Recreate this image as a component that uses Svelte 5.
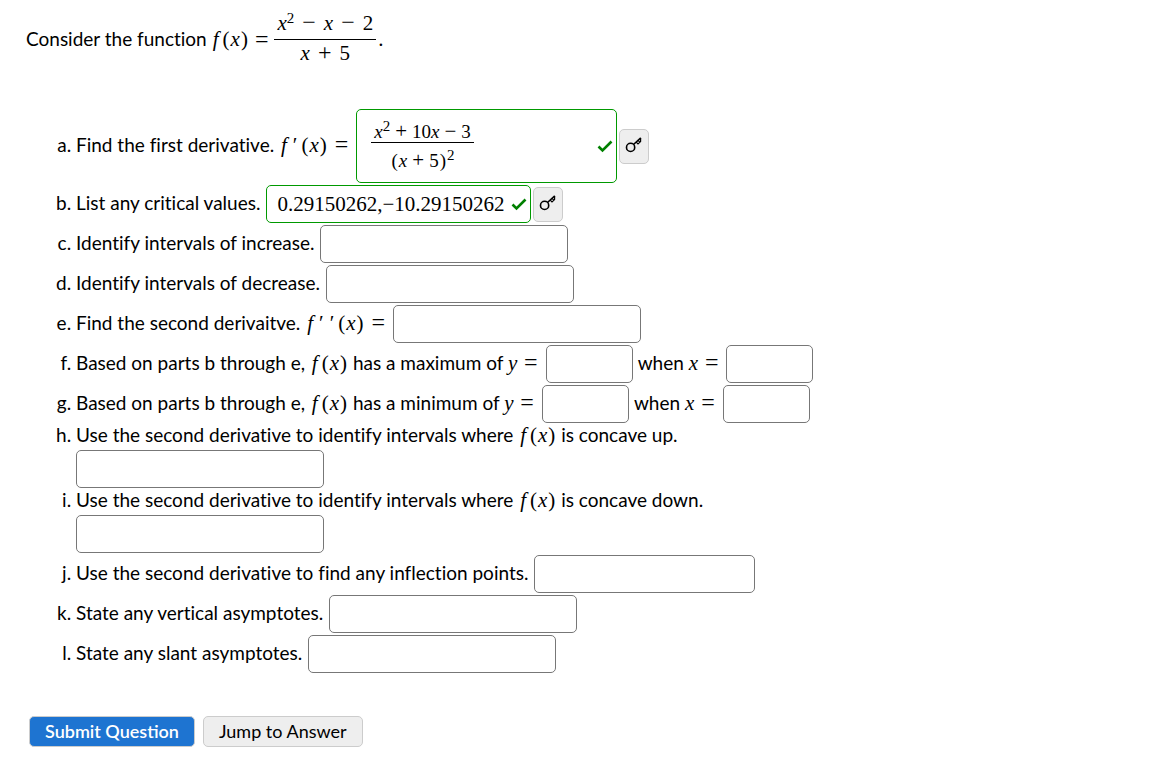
<script lang="ts">
	let criticalValues = $state('0.29150262,−10.29150262');
	let answers = $state<Record<string, string>>({});

	const extremes = [
		{ id: 'f', kind: 'maximum' },
		{ id: 'g', kind: 'minimum' },
	];

	const concavity = [
		{ id: 'h', direction: 'up' },
		{ id: 'i', direction: 'down' },
	];

	const asymptotes = [
		{ id: 'k', kind: 'vertical' },
		{ id: 'l', kind: 'slant' },
	];

	function handleSubmit(e: SubmitEvent) {
		e.preventDefault();
	}
</script>

{#snippet fx(primes = '')}
	<span class="math"><i class="fn">f</i>{#each primes as p}<span class="prime">{p}</span>{/each}<span class="paren">(</span><i>x</i><span class="paren">)</span></span>
{/snippet}

{#snippet check()}
	<svg class="check" width="16" height="14" viewBox="0 0 16 14" fill="none" stroke="#008000" stroke-width="2.6" aria-label="Correct" role="img">
		<path d="M1.5 7.5L5.5 11.5L14.5 2.5" />
	</svg>
{/snippet}

{#snippet keyButton()}
	<button type="button" class="key" title="View Key" aria-label="View Key">
		<svg width="18" height="18" viewBox="0 0 18 18" fill="none" stroke="#000" stroke-width="1.6">
			<circle cx="5.6" cy="11.4" r="4.1" />
			<path d="M8.5 8.5L15.8 1.8" />
			<path d="M15.6 2V5.6L13 8L11.2 6.2M13 4.4L15 6.2" stroke-width="1.2" />
		</svg>
	</button>
{/snippet}

<form class="question" onsubmit={handleSubmit}>
	<div class="intro">
		<span class="lead">Consider the function</span>
		{@render fx()}
		<span class="math eq">=</span>
		<span class="math frac">
			<span class="num"><i>x</i><sup>2</sup><span class="op">−</span><i>x</i><span class="op">−</span>2</span>
			<span class="den"><i>x</i><span class="op">+</span>5</span>
		</span><span class="math stop">.</span>
	</div>

	<ol type="a">
		<li>
			<div class="row">
				<span id="label-a" class="prompt">Find the first derivative. {@render fx('′')} <span class="math eq">=</span></span>
				<div class="mathbox" role="textbox" tabindex="0" aria-labelledby="label-a">
					<span class="math frac small">
						<span class="num"><i>x</i><sup>2</sup><span class="op">+</span>10<i>x</i><span class="op">−</span>3</span>
						<span class="den"><span class="paren">(</span><i>x</i><span class="op">+</span>5<span class="paren">)</span><sup>2</sup></span>
					</span>
					{@render check()}
				</div>
				{@render keyButton()}
			</div>
		</li>
		<li>
			<div class="row">
				<label class="prompt" for="ans-b">List any critical values.</label>
				<div class="checked">
					<input id="ans-b" class="math" type="text" bind:value={criticalValues} />
					{@render check()}
				</div>
				{@render keyButton()}
			</div>
		</li>
		<li>
			<div class="row">
				<label class="prompt" for="ans-c">Identify intervals of increase.</label>
				<input id="ans-c" class="answer" type="text" bind:value={answers.c} />
			</div>
		</li>
		<li>
			<div class="row">
				<label class="prompt" for="ans-d">Identify intervals of decrease.</label>
				<input id="ans-d" class="answer" type="text" bind:value={answers.d} />
			</div>
		</li>
		<li>
			<div class="row">
				<label class="prompt" for="ans-e">Find the second derivaitve. {@render fx('′′')} <span class="math eq">=</span></label>
				<input id="ans-e" class="answer" type="text" bind:value={answers.e} />
			</div>
		</li>
		{#each extremes as { id, kind }}
			<li>
				<div class="row">
					<label class="prompt" for="ans-{id}-y">Based on parts b through e, {@render fx()} has a {kind} of <span class="math"><i>y</i></span> <span class="math eq">=</span></label>
					<input id="ans-{id}-y" class="answer short" type="text" bind:value={answers[id + 'y']} />
					<label class="prompt when" for="ans-{id}-x">when <span class="math"><i>x</i></span> <span class="math eq">=</span></label>
					<input id="ans-{id}-x" class="answer short" type="text" bind:value={answers[id + 'x']} />
				</div>
			</li>
		{/each}
		{#each concavity as { id, direction }}
			<li>
				<label class="line" for="ans-{id}">Use the second derivative to identify intervals where {@render fx()} is concave {direction}.</label>
				<div class="row">
					<input id="ans-{id}" class="answer" type="text" bind:value={answers[id]} />
				</div>
			</li>
		{/each}
		<li>
			<div class="row">
				<label class="prompt" for="ans-j">Use the second derivative to find any inflection points.</label>
				<input id="ans-j" class="answer medium" type="text" bind:value={answers.j} />
			</div>
		</li>
		{#each asymptotes as { id, kind }}
			<li>
				<div class="row">
					<label class="prompt" for="ans-{id}">State any {kind} asymptotes.</label>
					<input id="ans-{id}" class="answer" type="text" bind:value={answers[id]} />
				</div>
			</li>
		{/each}
	</ol>

	<div class="actions">
		<button type="submit" class="btn primary">Submit Question</button>
		<button type="button" class="btn">Jump to Answer</button>
	</div>
</form>

<style>
	:global(body) {
		margin: 0;
		background: #fff;
	}

	.question {
		padding: 10px 26px;
		font-family: 'Trebuchet MS', Lato, sans-serif;
		font-size: 19px;
		font-variant-ligatures: none;
		line-height: 21px;
		color: #000;
	}

	.intro {
		display: flex;
		align-items: center;
		gap: 4px;
		height: 58px;
	}

	.lead {
		padding-bottom: 2px;
	}

	.math {
		font-family: 'Liberation Serif', serif;
		font-size: 21px;
		line-height: 21px;
		white-space: nowrap;
	}

	.fn {
		margin: 0 3px 0 2px;
	}

	.prime {
		margin: 0 3px;
	}

	.paren {
		margin: 0 1px;
	}

	.eq {
		margin: 0 2px;
	}

	.eq,
	.op {
		font-size: 24px;
	}

	.op {
		margin: 0 8px;
		line-height: 0;
	}

	sup {
		font-size: 15px;
		line-height: 0;
		vertical-align: 7px;
	}

	.frac {
		display: inline-flex;
		flex-direction: column;
		text-align: center;
	}

	.num {
		padding: 0 3px 5px;
		border-bottom: 1px solid #000;
	}

	.den {
		padding: 3px 3px 2px;
	}

	.stop {
		margin-left: -2px;
	}

	.small {
		font-size: 19px;
		line-height: 20px;
	}

	.small .num {
		padding-bottom: 0;
	}

	.small .den {
		padding: 8px 3px 0;
	}

	.small .op {
		margin: 0 5px;
		font-size: 21px;
	}

	ol {
		margin: 40px 0 0;
		padding: 0 0 0 50px;
	}

	.row {
		display: flex;
		align-items: center;
		min-height: 40px;
		gap: 2px;
	}

	.prompt {
		padding: 0 4px 3px 0;
		white-space: nowrap;
	}

	.when {
		padding-left: 3px;
	}

	.line {
		display: block;
		padding-bottom: 3px;
	}

	input {
		box-sizing: border-box;
		margin: 0;
		color: #000;
	}

	.answer {
		width: 248px;
		height: 38px;
		padding: 4px 8px;
		border: 1px solid #777;
		border-radius: 5px;
		background: #fff;
		font-size: 19px;
	}

	.medium {
		width: 221px;
	}

	.short {
		width: 87px;
	}

	.mathbox,
	.checked {
		box-sizing: border-box;
		display: flex;
		align-items: center;
		justify-content: space-between;
		border: 1px solid #090;
		border-radius: 5px;
	}

	.mathbox {
		width: 261px;
		height: 74px;
		margin: 1px 0;
		padding: 0 3px 0 14px;
	}

	.checked {
		width: 265px;
		height: 38px;
		padding: 0 3px 0 10px;
	}

	.checked input {
		flex: 1;
		min-width: 0;
		padding: 0;
		border: none;
		outline: none;
		background: transparent;
	}

	.check {
		flex: none;
	}

	.key {
		display: flex;
		justify-content: center;
		box-sizing: border-box;
		width: 30px;
		height: 35px;
		padding: 6px 0;
		border: 1px solid #ccc;
		border-radius: 5px;
		background: #eee;
		cursor: pointer;
	}

	.actions {
		display: flex;
		gap: 8px;
		margin: 42px 3px 0;
	}

	.btn {
		height: 31px;
		padding: 0 15px;
		border: 1px solid #ccc;
		border-radius: 5px;
		background: #eee;
		color: #000;
		font-family: inherit;
		font-size: 18px;
		line-height: 21px;
		cursor: pointer;
	}

	.primary {
		background: #1e74d1;
		color: #fff;
		font-weight: 600;
	}
</style>
